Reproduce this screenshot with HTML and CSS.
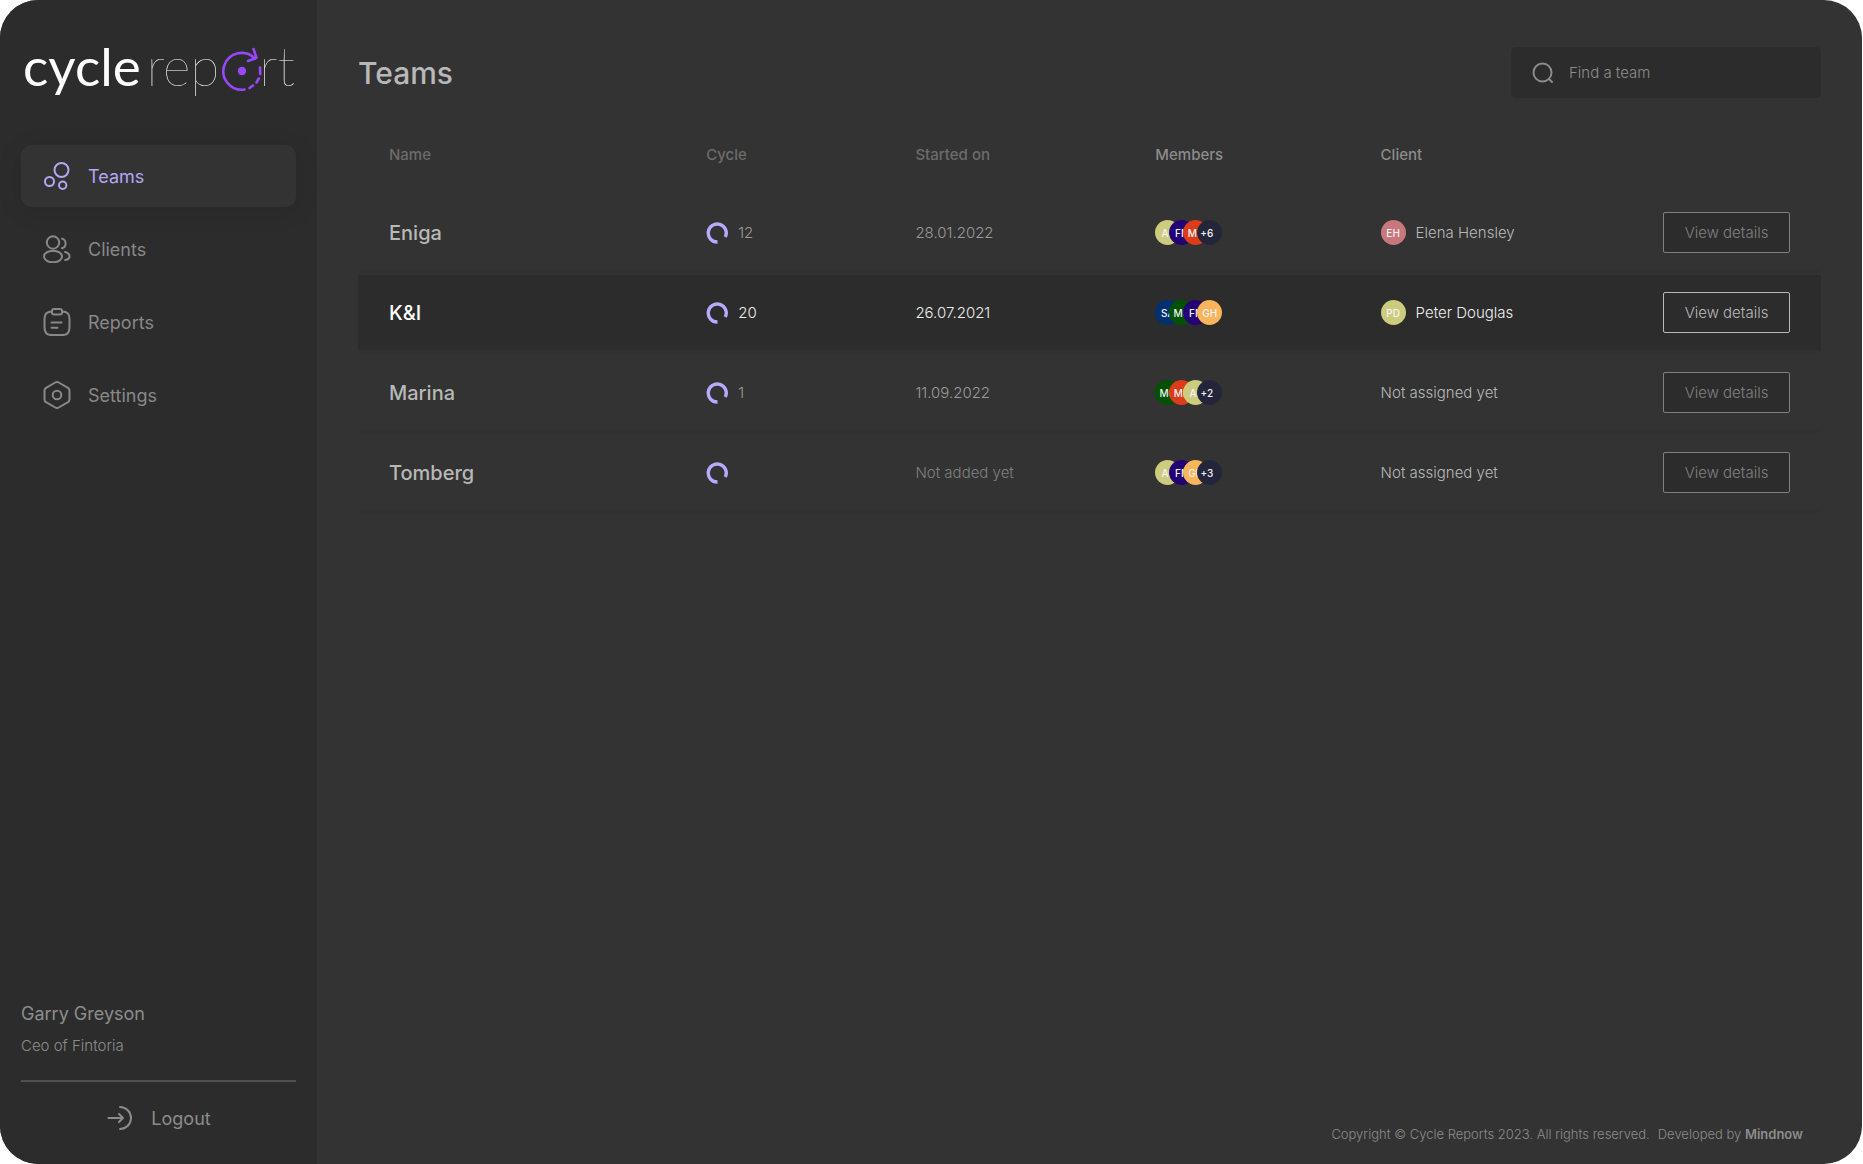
FILE: index.html
```html
<!DOCTYPE html>
<html lang="en">
<head>
    <meta charset="UTF-8">
    <meta name="viewport" content="width=device-width, initial-scale=1.0">
    <title>Teams - Cycle Report</title>
    <link rel="stylesheet" href="styles.css">
</head>
<body>
    <div class="app">
        <aside class="sidebar">
            <a class="logo" href="#" aria-label="Cycle Report">
                <span class="logo-bold">cycle</span>
                <span class="logo-thin">rep</span>
                <svg class="logo-ring" viewBox="0 0 40 46" fill="none" stroke="#9747ff" stroke-width="2.6" stroke-linecap="round" stroke-linejoin="round">
                    <path d="M22.5 42.5A18.4 18.4 0 1 1 33 11.5"/>
                    <path d="M31.5 2L34.5 10.8L26 14"/>
                    <path d="M27.5 41L31 38.5M34.5 35.5L36.8 31.5M38.2 27L38 20.5"/>
                    <circle cx="20" cy="24" r="4.2" fill="#9747ff" stroke="none"/>
                </svg>
                <span class="logo-thin">rt</span>
            </a>

            <nav class="menu">
                <a class="menu-item active" href="#">
                    <svg class="icon" viewBox="0 0 28 28">
                        <circle cx="18.5" cy="8" r="7"/>
                        <circle cx="6.5" cy="19.5" r="4.5"/>
                        <circle cx="19.7" cy="23.3" r="3.7"/>
                    </svg>
                    Teams
                </a>
                <a class="menu-item" href="#">
                    <svg class="icon" viewBox="0 0 28 28">
                        <circle cx="10" cy="7.5" r="6.2"/>
                        <ellipse cx="10" cy="21.5" rx="9" ry="5.8"/>
                        <path d="M19 3.6A5 5 0 0 1 19 13.2M22 17C27.8 18.5 28.2 24 22.2 25"/>
                    </svg>
                    Clients
                </a>
                <a class="menu-item" href="#">
                    <svg class="icon" viewBox="0 0 28 28">
                        <path d="M9 3.6C3.5 3.6 1.5 6 1.5 11V18.5C1.5 25 3.5 27 9.5 27H18.5C24.5 27 26.5 25 26.5 18.5V11C26.5 6 24.5 3.6 19 3.6"/>
                        <rect x="9" y="1" width="10" height="5.4" rx="2"/>
                        <path d="M8.5 14.5H18.5M8.5 19.8H14.5"/>
                    </svg>
                    Reports
                </a>
                <a class="menu-item" href="#">
                    <svg class="icon" viewBox="0 0 28 28">
                        <path d="M12.3 1.5Q14 .5 15.7 1.5L25 6.8Q26.5 7.8 26.5 9.5V18.5Q26.5 20.2 25 21.2L15.7 26.5Q14 27.5 12.3 26.5L3 21.2Q1.5 20.2 1.5 18.5V9.5Q1.5 7.8 3 6.8Z"/>
                        <circle cx="14" cy="14" r="4.3"/>
                    </svg>
                    Settings
                </a>
            </nav>

            <div class="account">
                <p class="account-name">Garry Greyson</p>
                <p class="account-role">Ceo of Fintoria</p>
                <button class="logout" type="button">
                    <svg class="icon" viewBox="0 0 28 28">
                        <path d="M14 3A11 11 0 0 1 14 25M2.5 14H17M13 10L17 14L13 18"/>
                    </svg>
                    Logout
                </button>
            </div>
        </aside>

        <main class="main">
            <header class="topbar">
                <h1>Teams</h1>
                <label class="search">
                    <svg class="search-icon" viewBox="0 0 22 22">
                        <circle cx="10.5" cy="10.5" r="9"/>
                        <path d="M17 17L20 20"/>
                    </svg>
                    <input type="text" placeholder="Find a team" aria-label="Find a team">
                </label>
            </header>

            <table class="teams">
                <thead>
                    <tr>
                        <th class="col-name">Name</th>
                        <th class="col-cycle">Cycle</th>
                        <th class="col-started">Started on</th>
                        <th class="col-members strong">Members</th>
                        <th class="col-client strong">Client</th>
                        <th class="col-action"></th>
                    </tr>
                </thead>
                <tbody>
                    <tr>
                        <td class="name">Eniga</td>
                        <td>
                            <div class="cycle">
                                <svg class="ring" viewBox="0 0 22 22"><path d="M11.5 20A9 9 0 1 1 19.3 15"/></svg>12
                            </div>
                        </td>
                        <td>28.01.2022</td>
                        <td>
                            <div class="members">
                                <span class="avatar olive">AL</span><span class="avatar indigo">FN</span><span class="avatar red">MK</span><span class="avatar more">+6</span>
                            </div>
                        </td>
                        <td><div class="client"><span class="avatar rose">EH</span>Elena Hensley</div></td>
                        <td><button class="details" type="button">View details</button></td>
                    </tr>
                    <tr class="selected">
                        <td class="name">K&amp;I</td>
                        <td>
                            <div class="cycle">
                                <svg class="ring" viewBox="0 0 22 22"><path d="M11.5 20A9 9 0 1 1 19.3 15"/></svg>20
                            </div>
                        </td>
                        <td>26.07.2021</td>
                        <td>
                            <div class="members">
                                <span class="avatar navy">SA</span><span class="avatar green">MO</span><span class="avatar indigo">FN</span><span class="avatar orange">GH</span>
                            </div>
                        </td>
                        <td><div class="client"><span class="avatar olive">PD</span>Peter Douglas</div></td>
                        <td><button class="details" type="button">View details</button></td>
                    </tr>
                    <tr>
                        <td class="name">Marina</td>
                        <td>
                            <div class="cycle">
                                <svg class="ring" viewBox="0 0 22 22"><path d="M11.5 20A9 9 0 1 1 19.3 15"/></svg>1
                            </div>
                        </td>
                        <td>11.09.2022</td>
                        <td>
                            <div class="members">
                                <span class="avatar green">MO</span><span class="avatar red">MK</span><span class="avatar olive">AL</span><span class="avatar more">+2</span>
                            </div>
                        </td>
                        <td><div class="client">Not assigned yet</div></td>
                        <td><button class="details" type="button">View details</button></td>
                    </tr>
                    <tr>
                        <td class="name">Tomberg</td>
                        <td>
                            <div class="cycle">
                                <svg class="ring" viewBox="0 0 22 22"><path d="M11.5 20A9 9 0 1 1 19.3 15"/></svg>
                            </div>
                        </td>
                        <td class="empty">Not added yet</td>
                        <td>
                            <div class="members">
                                <span class="avatar olive">AL</span><span class="avatar indigo">FN</span><span class="avatar orange">GH</span><span class="avatar more">+3</span>
                            </div>
                        </td>
                        <td><div class="client">Not assigned yet</div></td>
                        <td><button class="details" type="button">View details</button></td>
                    </tr>
                </tbody>
            </table>

            <footer class="footer">
                <span>Copyright © Cycle Reports 2023. All rights reserved.</span>
                <span>Developed by <strong>Mindnow</strong></span>
            </footer>
        </main>
    </div>
</body>
</html>
```
FILE: styles.css
```css
* {
    box-sizing: border-box;
}

body {
    margin: 0;
    padding-right: 1px;
    background-color: #fff;
    font-family: Inter, "Open Sans", sans-serif;
    font-size: 15px;
    color: #8c8c8c;
}

button,
input {
    font: inherit;
    color: inherit;
}

p,
h1 {
    margin: 0;
}

.app {
    display: flex;
    min-height: 100vh;
    background-color: #333;
    border-radius: 38px;
    overflow: hidden;
}

/* Sidebar */
.sidebar {
    display: flex;
    flex-direction: column;
    flex: 0 0 317px;
    padding: 36px 21px 28px;
    background-color: #2c2c2c;
}

.logo {
    display: flex;
    align-items: flex-start;
    height: 68px;
    padding-left: 2px;
    font-family: Lato, sans-serif;
    font-size: 53px;
    line-height: 60px;
    color: #fff;
    text-decoration: none;
}

.logo-bold {
    margin-right: 6px;
    font-weight: 400;
}

.logo-thin {
    font-weight: 100;
}

.logo-ring {
    width: 40px;
    height: 46px;
    margin: 11px -3px 0 3px;
    flex: none;
}

.menu {
    display: flex;
    flex-direction: column;
    gap: 11px;
    margin-top: 41px;
}

.menu-item {
    display: flex;
    align-items: center;
    gap: 17px;
    height: 62px;
    padding: 0 22px;
    border-radius: 10px;
    font-size: 18px;
    color: #888;
    text-decoration: none;
}

.menu-item.active {
    background-color: #333;
    color: #b4a5f5;
    box-shadow: 0 4px 24px rgba(0, 0, 0, 0.1);
}

.icon {
    width: 28px;
    height: 28px;
    fill: none;
    stroke: currentColor;
    stroke-width: 2;
    stroke-linecap: round;
    stroke-linejoin: round;
}

.account {
    margin-top: auto;
}

.account-name {
    font-size: 18px;
    line-height: 24px;
}

.account-role {
    margin-top: 10px;
    line-height: 20px;
    font-weight: 300;
}

.logout {
    display: flex;
    align-items: center;
    justify-content: center;
    gap: 17px;
    width: 100%;
    margin-top: 24px;
    padding: 22px 0 4px;
    border: 0;
    border-top: 2px solid #505050;
    background: none;
    font-size: 18px;
    cursor: pointer;
}

/* Main */
.main {
    display: flex;
    flex-direction: column;
    flex: 1;
    padding: 47px 41px 20px;
}

.topbar {
    display: flex;
    justify-content: space-between;
    align-items: center;
}

h1 {
    font-size: 30px;
    font-weight: 500;
    color: #b8b8b8;
}

.search {
    display: flex;
    align-items: center;
    gap: 15px;
    width: 310px;
    height: 51px;
    padding: 0 21px;
    border-radius: 5px;
    background-color: #2c2c2c;
}

.search-icon {
    width: 22px;
    height: 22px;
    flex: none;
    fill: none;
    stroke: currentColor;
    stroke-width: 2;
    stroke-linecap: round;
}

.search input {
    width: 100%;
    padding: 0;
    border: 0;
    outline: 0;
    background: none;
}

.search input::placeholder {
    color: #8c8c8c;
    font-weight: 300;
    opacity: 1;
}

/* Teams table */
.teams {
    width: 100%;
    margin-top: 31px;
    border-collapse: separate;
    border-spacing: 0 5px;
    table-layout: fixed;
}

.teams th,
.teams td {
    padding: 0;
    text-align: left;
}

.teams th {
    height: 56px;
    padding-bottom: 16px;
    font-weight: 500;
    color: #6c6c6c;
}

.teams th.strong {
    color: #8c8c8c;
}

.teams td {
    height: 75px;
    color: #9a9a9a;
    font-weight: 300;
    box-shadow: 0 3px 0 #313131;
}

.teams .col-name,
.teams .name {
    padding-left: 31px;
}

.col-name {
    width: 23.8%;
}

.col-cycle {
    width: 14.3%;
}

.col-started {
    width: 16.4%;
}

.col-members {
    width: 15.4%;
}

.col-client {
    width: 19.3%;
}

.col-action {
    width: 10.8%;
}

.teams .name {
    font-size: 20px;
    font-weight: 500;
    color: #b8b8b8;
}

.teams .empty {
    color: #808080;
}

.teams .selected td {
    background-color: #2c2c2c;
    color: #eee;
}

.teams .selected .name {
    color: #fff;
}

.cycle,
.client {
    display: flex;
    align-items: center;
    gap: 10px;
}

.client {
    color: #b8b8b8;
}

.selected .client {
    color: #eee;
}

.ring {
    width: 22px;
    height: 22px;
    fill: none;
    stroke: #b9a9ff;
    stroke-width: 3.4;
}

.members {
    display: flex;
}

.avatar {
    display: flex;
    align-items: center;
    justify-content: center;
    flex: none;
    width: 25px;
    height: 25px;
    border-radius: 50%;
    font-size: 10px;
    font-weight: 500;
    color: #f4f4f4;
}

.members .avatar + .avatar {
    margin-left: -11px;
}

.olive {
    background-color: #cccc7f;
}

.indigo {
    background-color: #230073;
}

.red {
    background-color: #dc3c1a;
}

.navy {
    background-color: #003070;
}

.green {
    background-color: #005200;
}

.orange {
    background-color: #f8b55c;
}

.rose {
    background-color: #c8777d;
}

.more {
    padding-right: 6px;
    background-color: #24253a;
}

.details {
    display: block;
    width: 127px;
    height: 41px;
    margin-left: auto;
    margin-right: 31px;
    padding: 0;
    border: 1px solid #808080;
    border-radius: 2px;
    background-color: #2c2c2c;
    color: #808080;
    cursor: pointer;
}

.selected .details {
    border-color: #b8b8b8;
    color: #b8b8b8;
}

.footer {
    display: flex;
    justify-content: flex-end;
    gap: 8px;
    margin-top: auto;
    padding-right: 18px;
    font-size: 13px;
    line-height: 20px;
    font-weight: 300;
}

.footer strong {
    font-weight: 600;
}
```
